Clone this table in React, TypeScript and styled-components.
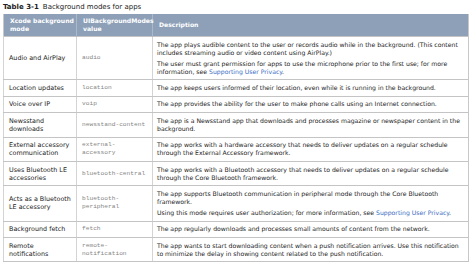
import React from "react";
import styled, { createGlobalStyle } from "styled-components";

const GlobalStyle = createGlobalStyle`
  html, body {
    margin: 0;
    padding: 0;
    background: #ffffff;
  }
  body {
    font-family: "DejaVu Sans", "Liberation Sans", sans-serif;
    color: #222;
  }
`;

type Row = {
  name: string;
  code: string;
  desc: React.ReactNode[];
};

// built lazily so the styled Link below exists when this runs
function getRows(): Row[] {
  return [
    {
      name: "Audio and AirPlay",
      code: "audio",
      desc: [
        "The app plays audible content to the user or records audio while in the background. (This content includes streaming audio or video content using AirPlay.)",
        <>
          The user must grant permission for apps to use the microphone prior to the first use; for more information, see{" "}
          <Link>Supporting User Privacy</Link>.
        </>,
      ],
    },
    {
      name: "Location updates",
      code: "location",
      desc: ["The app keeps users informed of their location, even while it is running in the background."],
    },
    {
      name: "Voice over IP",
      code: "voip",
      desc: ["The app provides the ability for the user to make phone calls using an Internet connection."],
    },
    {
      name: "Newsstand downloads",
      code: "newsstand-content",
      desc: ["The app is a Newsstand app that downloads and processes magazine or newspaper content in the background."],
    },
    {
      name: "External accessory communication",
      code: "external-\naccessory",
      desc: [
        "The app works with a hardware accessory that needs to deliver updates on a regular schedule through the External Accessory framework.",
      ],
    },
    {
      name: "Uses Bluetooth LE accessories",
      code: "bluetooth-central",
      desc: [
        "The app works with a Bluetooth accessory that needs to deliver updates on a regular schedule through the Core Bluetooth framework.",
      ],
    },
    {
      name: "Acts as a Bluetooth LE accessory",
      code: "bluetooth-\nperipheral",
      desc: [
        "The app supports Bluetooth communication in peripheral mode through the Core Bluetooth framework.",
        <>
          Using this mode requires user authorization; for more information, see <Link>Supporting User Privacy</Link>.
        </>,
      ],
    },
    {
      name: "Background fetch",
      code: "fetch",
      desc: ["The app regularly downloads and processes small amounts of content from the network."],
    },
    {
      name: "Remote notifications",
      code: "remote-\nnotification",
      desc: [
        "The app wants to start downloading content when a push notification arrives. Use this notification to minimize the delay in showing content related to the push notification.",
      ],
    },
  ];
}

export default function App() {
  const rows = getRows();
  return (
    <>
      <GlobalStyle />
      <Page>
        <Caption>
          <strong>Table 3-1</strong>
          <span>Background modes for apps</span>
        </Caption>
        <Table>
          <colgroup>
            <col style={{ width: 73 }} />
            <col style={{ width: 76 }} />
            <col />
          </colgroup>
          <thead>
            <tr>
              <Th>Xcode background mode</Th>
              <Th>UIBackgroundModes value</Th>
              <Th>Description</Th>
            </tr>
          </thead>
          <tbody>
            {rows.map((r) => (
              <tr key={r.name}>
                <NameCell>{r.name}</NameCell>
                <CodeCell>{r.code}</CodeCell>
                <DescCell>
                  {r.desc.map((d, i) => (
                    <Para key={i}>{d}</Para>
                  ))}
                </DescCell>
              </tr>
            ))}
          </tbody>
        </Table>
      </Page>
    </>
  );
}

const Page = styled.div`
  padding: 3px 5px 0 3px;
`;

const Caption = styled.div`
  display: flex;
  gap: 4px;
  align-items: baseline;
  height: 11px;
  font-size: 7px;
  line-height: 8px;
  color: #222;
  strong {
    font-weight: 700;
  }
`;

const Table = styled.table`
  width: 466px;
  border-collapse: collapse;
  table-layout: fixed;
  font-size: 6.15px;
  line-height: 8px;
  border-left: 1px solid #c8c8c8;
  border-right: 1px solid #c8c8c8;
`;

const Th = styled.th`
  background: #8da0b8;
  color: #ffffff;
  font-size: 6.1px;
  font-weight: 700;
  text-align: left;
  vertical-align: middle;
  padding: 0 2px 0 6px;
  height: 22px;
  border-left: 1px solid #a9b8ca;
  &:first-child {
    border-left: none;
  }
`;

const Cell = styled.td`
  vertical-align: middle;
  border-top: 1px solid #c4c4c4;
  border-bottom: 1px solid #c4c4c4;
  border-left: 1px solid #d4d4d4;
  padding: 3.7px 5px;
`;

const NameCell = styled(Cell)`
  font-size: 6.4px;
  color: #222;
`;

const CodeCell = styled(Cell)`
  font-family: "Liberation Mono", "DejaVu Sans Mono", monospace;
  font-size: 6.2px;
  color: #858585;
  white-space: pre-line;
`;

const DescCell = styled(Cell)`
  padding: 3.7px 3px 3.7px 4px;
  color: #222;
`;

const Para = styled.p`
  margin: 0;
  & + & {
    margin-top: 3px;
  }
`;

const Link = styled.span`
  color: #3a6cc4;
`;
